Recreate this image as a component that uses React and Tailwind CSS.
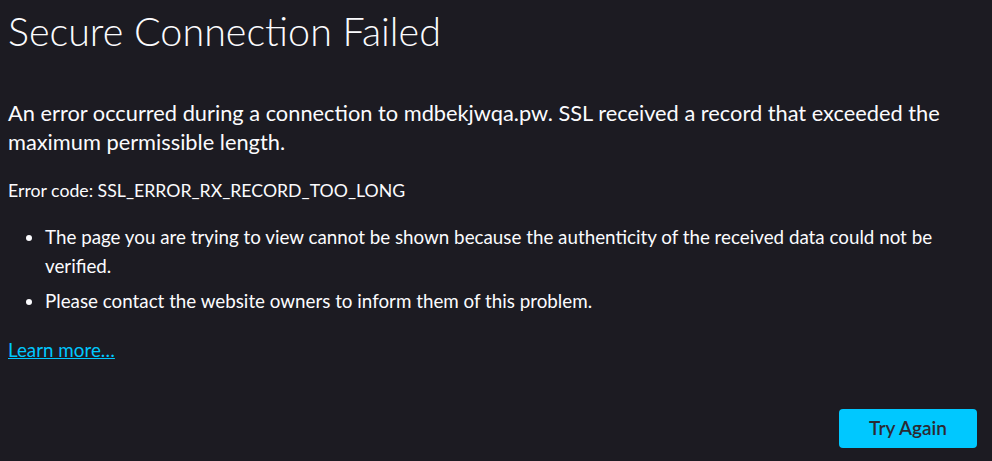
export default function App() {
  return (
    <div className="min-h-[461px] bg-[#1c1b22] text-[#fbfbfe] font-['Lato','Liberation_Sans',sans-serif] px-2">
      <h1 className="text-[39.5px] font-light leading-[56px] pt-[3px]">Secure Connection Failed</h1>
      <p className="text-[21.8px] leading-[29px] mt-[39px]">
        An error occurred during a connection to mdbekjwqa.pw. SSL received a record that exceeded the maximum permissible length.
      </p>
      <p className="text-[17.7px] leading-[24px] mt-[23px]">Error code: SSL_ERROR_RX_RECORD_TOO_LONG</p>
      <ul className="list-disc pl-[37px] mt-[19px] text-[18.8px] leading-[29px]">
        <li>The page you are trying to view cannot be shown because the authenticity of the received data could not be verified.</li>
        <li className="mt-[6px]">Please contact the website owners to inform them of this problem.</li>
      </ul>
      <a href="#" className="inline-block mt-[23px] text-[18.8px] leading-[24px] text-[#00c8ff] underline">Learn more…</a>
      <div className="flex justify-end pr-[7px] mt-[46px]">
        <button className="w-[138px] h-[39px] rounded-[4px] bg-[#00c8ff] text-[#2b2a33] text-[19px] font-semibold">Try Again</button>
      </div>
    </div>
  )
}
